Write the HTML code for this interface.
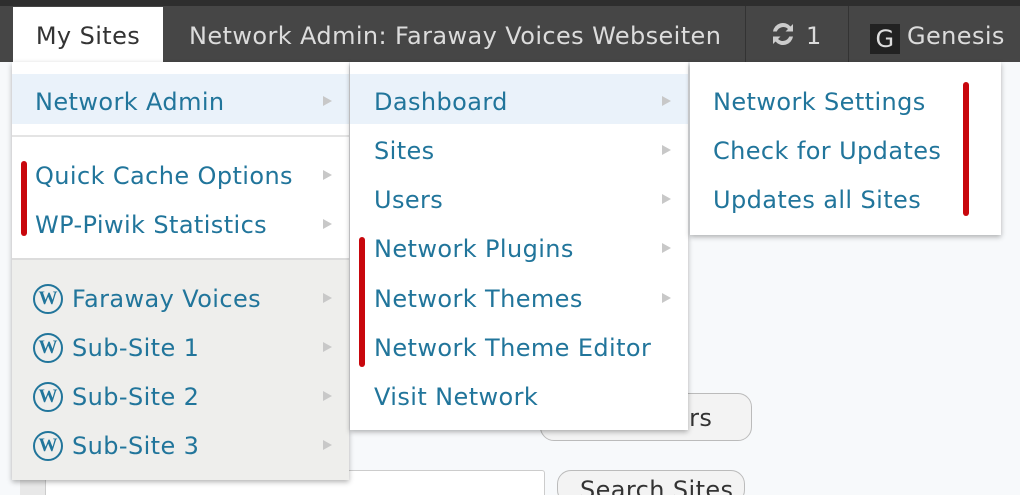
<!DOCTYPE html>
<html style="overflow:hidden;width:1020px;height:495px"><head><style>
*{margin:0;padding:0;box-sizing:border-box}
body{width:1020px;height:495px;overflow:hidden;background:#f7f9fb;font-family:"DejaVu Sans","Liberation Sans",sans-serif;font-size:24px;letter-spacing:0.4px;position:relative}
.a{position:absolute}
.bar{left:0;top:0;width:1020px;height:62px;background:#464646;border-top:6px solid #2e2e2e}
.bt{color:#dcdcdc;top:8px;height:56px;line-height:56px;white-space:nowrap}
.sep{top:6px;width:1px;height:56px;background:#333}
.menu{background:#fff;box-shadow:0 2px 5px rgba(0,0,0,.3)}
.it{position:absolute;left:0;right:0;height:49px;padding-top:4px;color:#21759b;white-space:nowrap;display:flex;align-items:center}
.arr{position:absolute;right:17px;top:21px;width:0;height:0;border-left:9px solid #c8c8c8;border-top:5px solid transparent;border-bottom:5px solid transparent}
.red{position:absolute;background:#c8070d;width:6px;border-radius:3px}
.wp{display:inline-block;width:30px;height:30px;border:2.5px solid #21759b;border-radius:50%;margin-right:9px;text-align:center;font-size:19px;line-height:26px;font-weight:bold;font-family:"Liberation Serif",serif;letter-spacing:0}
</style></head><body>
<div class="a" style="left:45px;top:470px;width:500px;height:30px;border:1px solid #ccc;background:#fff;border-radius:3px"></div>
<div class="a" style="left:557px;top:470px;width:188px;height:34px;border:1px solid #bbb;background:#f3f3f3;border-radius:14px;color:#333;padding-left:22px;line-height:38px">Search Sites</div>
<div class="a" style="left:540px;top:393px;width:212px;height:48px;border:1px solid #bbb;background:#f3f3f3;border-radius:14px;color:#333;padding-left:120px;line-height:48px">sers</div>
<div class="a" style="left:20px;top:470px;width:25px;height:30px;background:#e8e8e8"></div>

<div class="a bar"></div>
<div class="a" style="left:13px;top:7px;width:150px;height:56px;background:#fff;color:#333;line-height:58px;text-align:center">My Sites</div>
<div class="a bt" style="left:189px">Network Admin: Faraway Voices Webseiten</div>
<div class="a sep" style="left:745px"></div>
<div class="a bt" style="left:768px"><svg width="30" height="30" viewBox="0 0 24 24" style="vertical-align:-5px"><path d="M4 10a8 8 0 0 1 14-4l2-2v6h-6l2-2a5.5 5.5 0 0 0-9 2z M20 14a8 8 0 0 1-14 4l-2 2v-6h6l-2 2a5.5 5.5 0 0 0 9-2z" fill="#ccc"/></svg> 1</div>
<div class="a sep" style="left:848px"></div>
<div class="a bt" style="left:870px"><span style="display:inline-block;width:30px;height:30px;background:#222;color:#ddd;text-align:center;line-height:30px;vertical-align:-3px;font-size:24px;margin-right:7px">G</span>Genesis</div>

<div class="a menu" style="left:12px;top:62px;width:337px;height:418px">
 <div style="position:absolute;left:0;right:0;top:12px;height:50px;background:#eaf2fa"></div>
 <div class="it" style="top:13px;padding-left:23px">Network Admin<span class="arr"></span></div>
 <div style="position:absolute;left:0;right:0;top:73px;height:2px;background:#e4e4e4"></div>
 <div class="it" style="top:87px;padding-left:23px">Quick Cache Options<span class="arr"></span></div>
 <div class="it" style="top:136px;padding-left:23px">WP-Piwik Statistics<span class="arr"></span></div>
 <div style="position:absolute;left:0;right:0;top:196px;bottom:0;background:#eeeeec;border-top:2px solid #dcdcdc"></div>
 <div class="it" style="top:210px;padding-left:21px"><span class="wp">W</span>Faraway Voices<span class="arr"></span></div>
 <div class="it" style="top:259px;padding-left:21px"><span class="wp">W</span>Sub-Site 1<span class="arr"></span></div>
 <div class="it" style="top:308px;padding-left:21px"><span class="wp">W</span>Sub-Site 2<span class="arr"></span></div>
 <div class="it" style="top:357px;padding-left:21px"><span class="wp">W</span>Sub-Site 3<span class="arr"></span></div>
</div>

<div class="a menu" style="left:350px;top:62px;width:338px;height:368px">
 <div style="position:absolute;left:0;right:0;top:12px;height:50px;background:#eaf2fa"></div>
 <div class="it" style="top:13px;padding-left:24px">Dashboard<span class="arr"></span></div>
 <div class="it" style="top:62px;padding-left:24px">Sites<span class="arr"></span></div>
 <div class="it" style="top:111px;padding-left:24px">Users<span class="arr"></span></div>
 <div class="it" style="top:160px;padding-left:24px">Network Plugins<span class="arr"></span></div>
 <div class="it" style="top:210px;padding-left:24px">Network Themes<span class="arr"></span></div>
 <div class="it" style="top:259px;padding-left:24px">Network Theme Editor</div>
 <div class="it" style="top:308px;padding-left:24px">Visit Network</div>
</div>

<div class="a menu" style="left:690px;top:62px;width:311px;height:173px">
 <div class="it" style="top:13px;padding-left:23px">Network Settings</div>
 <div class="it" style="top:62px;padding-left:23px">Check for Updates</div>
 <div class="it" style="top:111px;padding-left:23px">Updates all Sites</div>
</div>

<div class="red" style="left:21px;top:161px;height:75px"></div>
<div class="red" style="left:359px;top:237px;height:130px"></div>
<div class="red" style="left:963px;top:82px;height:134px"></div>
</body></html>
